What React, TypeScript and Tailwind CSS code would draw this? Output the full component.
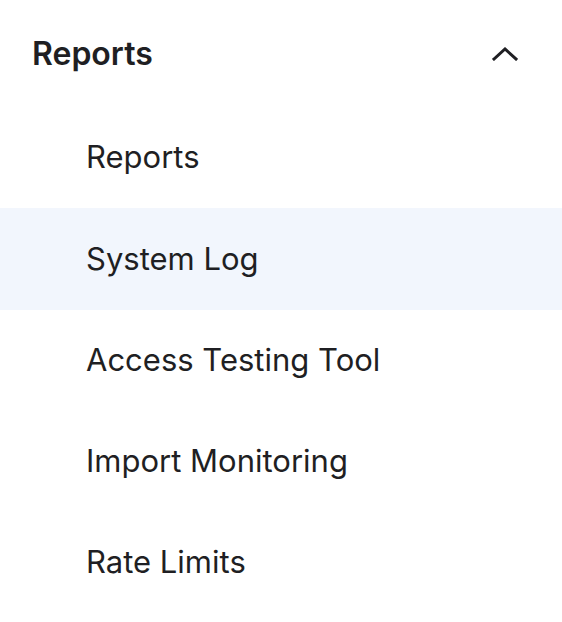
const items = ["Reports", "System Log", "Access Testing Tool", "Import Monitoring", "Rate Limits"];

export default function App() {
  return (
    <div className="w-[562px] h-[622px] bg-white font-['Inter',sans-serif] text-[#1f1f23]">
      <div className="h-[107px] flex items-center justify-between pl-[32px] pr-[44px]">
        <span className="text-[32px] font-semibold">Reports</span>
        <svg width="26" height="14" viewBox="0 0 26 14" fill="none" stroke="#1f1f23" strokeWidth="3" strokeLinecap="square">
          <path d="M2 12 L13 2 L24 12" />
        </svg>
      </div>
      {items.map((label, i) => (
        <div
          key={label}
          className={`h-[101.25px] flex items-center pl-[86px] text-[31px] ${i === 1 ? "bg-[#f2f6fd]" : ""}`}
        >
          {label}
        </div>
      ))}
    </div>
  );
}
